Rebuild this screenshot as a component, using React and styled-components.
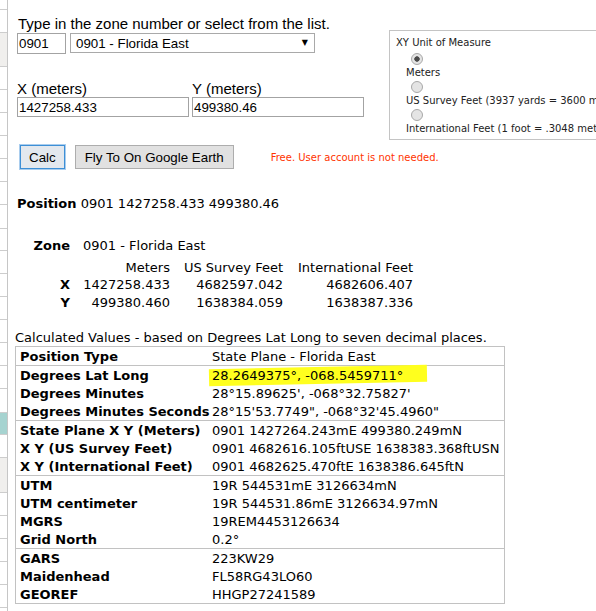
import React from 'react';
import styled, { createGlobalStyle, css } from 'styled-components';

const GlobalStyle = createGlobalStyle`
  html, body { margin: 0; padding: 0; background: #fff; overflow: hidden; }
  body { font-family: "DejaVu Sans", Verdana, sans-serif; color: #000; }
  * { box-sizing: border-box; }
`;

const Page = styled.div`
  display: flex;
  width: 596px;
  height: 611px;
  overflow: hidden;
`;

const Strip = styled.div`
  width: 8px;
  flex-shrink: 0;
  border-right: 1px solid #c6c6c6;
  display: flex;
  flex-direction: column;
`;

const StripCell = styled.div`
  flex-shrink: 0;
  height: ${p => p.$h}px;
  border-bottom: 1px solid #cdcdcd;
  background: ${p => (p.$tone === 'gray' ? '#f0efed' : p.$tone === 'teal' ? '#a6d3d0' : '#fff')};
`;

const Main = styled.main`
  flex: 1;
  min-width: 0;
  padding-left: 7px;
`;

const TopRow = styled.div`
  display: flex;
  align-items: flex-start;
`;

const FormCol = styled.div`
  width: 374px;
  flex-shrink: 0;
  padding-top: 15px;
  font-family: "Liberation Sans", Arial, sans-serif;
`;

const Prompt = styled.div`
  font-size: 15px;
  line-height: 17px;
  margin-left: 3px;
  white-space: nowrap;
`;

const ZoneRow = styled.div`
  display: flex;
  align-items: flex-start;
  gap: 4px;
  margin: 1px 0 0 2px;
`;

const inputBase = css`
  height: 20px;
  border: 1px solid #a3a3a3;
  padding: 0 1px;
  font-family: "Liberation Sans", Arial, sans-serif;
  font-size: 13.33px;
  color: #000;
  background: #fff;
  outline: none;
`;

const ZoneInput = styled.input`
  ${inputBase};
  width: 49px;
  height: 21px;
`;

const SelectBox = styled.div`
  width: 245px;
  height: 20px;
  border: 1px solid #a9a9a9;
  display: flex;
  align-items: center;
  justify-content: space-between;
  padding: 0 6px 0 5px;
  font-size: 13.33px;
  color: #000;
`;

const Arrow = styled.span`
  font-family: "DejaVu Sans", sans-serif;
  font-size: 8px;
  line-height: 1;
`;

const CoordGrid = styled.div`
  display: grid;
  grid-template-columns: 172px 172px;
  column-gap: 3px;
  margin: 26px 0 0 2px;
`;

const FieldLabel = styled.label`
  font-size: 15px;
  line-height: 17px;
`;

const CoordInput = styled.input`
  ${inputBase};
  width: 100%;
`;

const ButtonRow = styled.div`
  display: flex;
  align-items: center;
  margin: 28px 0 0 5px;
  white-space: nowrap;
`;

const Button = styled.button`
  flex-shrink: 0;
  height: 24px;
  padding: 0 ${p => p.$pad || 8}px;
  margin-left: ${p => p.$gap || 0}px;
  border: 1px solid #adadad;
  background: #e1e1e1;
  font-family: "Liberation Sans", Arial, sans-serif;
  font-size: 13.33px;
  color: #000;
  white-space: nowrap;
  ${p =>
    p.$focused &&
    css`
      border-color: #3d8fd6;
      background: #e3e8ee;
      box-shadow: 0 0 0 1px #a9cdee;
    `}
`;

const Note = styled.span`
  flex-shrink: 0;
  margin-left: 37px;
  font-family: "DejaVu Sans", Verdana, sans-serif;
  font-size: 10px;
  color: #ff3300;
  white-space: nowrap;
`;

const UnitBox = styled.div`
  margin-top: 30px;
  width: 260px;
  height: 110px;
  flex-shrink: 0;
  border: 1px solid #c4c4c4;
  padding: 6px 0 0 6px;
  font-size: 10px;
  color: #222;
  white-space: nowrap;
`;

const UnitTitle = styled.div`
  line-height: 12px;
  margin-bottom: 2px;
`;

const UnitOption = styled.label`
  display: grid;
  grid-template-rows: 15px 13px;
  padding-left: 10px;
  line-height: 13px;
`;

const Radio = styled.input`
  appearance: none;
  -webkit-appearance: none;
  width: 12px;
  height: 12px;
  margin: 0 0 0 5px;
  align-self: center;
  border-radius: 50%;
  border: 1px solid #a8a8a8;
  background: #e4e4e4;
  &:checked {
    background: radial-gradient(circle, #4a4a4a 0 2.4px, #e4e4e4 3px);
  }
`;

const Position = styled.div`
  margin: 27px 0 0 2px;
  font-size: 13px;
  line-height: 16px;
`;

const Strong = styled.b`
  font-weight: bold;
`;

const ZoneGrid = styled.div`
  display: grid;
  grid-template-columns: 50px 87px 100px 117px;
  grid-template-rows: 22px 17px 18px 18px;
  column-gap: 13px;
  align-items: start;
  margin: 24px 0 0 5px;
  font-size: 13px;
  line-height: 18px;
  white-space: nowrap;
`;

const ZCell = styled.div`
  text-align: ${p => (p.$left ? 'left' : 'right')};
  font-weight: ${p => (p.$bold ? 'bold' : 'normal')};
  grid-column: ${p => p.$span || 'auto'};
  line-height: ${p => (p.$head ? '17px' : '18px')};
  padding-top: 1px;
`;

const CalcHeading = styled.div`
  margin-top: 19px;
  font-size: 13px;
  line-height: 16px;
  white-space: nowrap;
`;

const ResultTable = styled.div`
  width: 490px;
  border: 1px solid #c2c2c2;
`;

const Group = styled.div`
  & + & {
    border-top: 1px solid #c2c2c2;
  }
`;

const Row = styled.div`
  display: grid;
  grid-template-columns: 196px 1fr;
  height: 18px;
  padding-top: 1px;
  font-size: 13px;
  line-height: 17px;
  white-space: nowrap;
`;

const RowLabel = styled.div`
  font-weight: bold;
  padding-left: 4px;
`;

const RowValue = styled.div``;

const Highlight = styled.span`
  position: relative;
  z-index: 0;
  &::before {
    content: '';
    position: absolute;
    z-index: -1;
    left: -3px;
    right: -24px;
    top: -1px;
    bottom: -1px;
    background: #ffff1e;
    transform: rotate(-1.2deg);
  }
`;

const stripCells = [
  { h: 10 }, { h: 23 }, { h: 34, tone: 'gray' }, { h: 23 }, { h: 23 }, { h: 23 },
  { h: 23 }, { h: 23 }, { h: 23 }, { h: 24 }, { h: 22 }, { h: 23 }, { h: 23 },
  { h: 23 }, { h: 23 }, { h: 23 }, { h: 23 }, { h: 24 }, { h: 22, tone: 'teal' },
  { h: 23 }, { h: 35, tone: 'gray' }, { h: 23 }, { h: 23 }, { h: 23 }, { h: 23 },
  { h: 23 }, { h: 23 },
];

const results = [
  [['Position Type', 'State Plane - Florida East']],
  [
    ['Degrees Lat Long', '28.2649375°, -068.5459711°', true],
    ['Degrees Minutes', "28°15.89625', -068°32.75827'"],
    ['Degrees Minutes Seconds', '28°15\'53.7749", -068°32\'45.4960"'],
  ],
  [
    ['State Plane X Y (Meters)', '0901 1427264.243mE 499380.249mN'],
    ['X Y (US Survey Feet)', '0901 4682616.105ftUSE 1638383.368ftUSN'],
    ['X Y (International Feet)', '0901 4682625.470ftE 1638386.645ftN'],
  ],
  [
    ['UTM', '19R 544531mE 3126634mN'],
    ['UTM centimeter', '19R 544531.86mE 3126634.97mN'],
    ['MGRS', '19REM4453126634'],
    ['Grid North', '0.2°'],
  ],
  [
    ['GARS', '223KW29'],
    ['Maidenhead', 'FL58RG43LO60'],
    ['GEOREF', 'HHGP27241589'],
  ],
];

const units = [
  'Meters',
  'US Survey Feet (3937 yards = 3600 meters)',
  'International Feet (1 foot = .3048 meters)',
];

export default function App() {
  return (
    <>
      <GlobalStyle />
      <Page>
        <Strip>
          {stripCells.map((c, i) => (
            <StripCell key={i} $h={c.h} $tone={c.tone} />
          ))}
        </Strip>
        <Main>
          <TopRow>
            <FormCol>
              <Prompt>Type in the zone number or select from the list.</Prompt>
              <ZoneRow>
                <ZoneInput defaultValue="0901" />
                <SelectBox>
                  <span>0901 - Florida East</span>
                  <Arrow>▼</Arrow>
                </SelectBox>
              </ZoneRow>
              <CoordGrid>
                <FieldLabel>X (meters)</FieldLabel>
                <FieldLabel>Y (meters)</FieldLabel>
                <CoordInput defaultValue="1427258.433" />
                <CoordInput defaultValue="499380.46" />
              </CoordGrid>
              <ButtonRow>
                <Button $focused>Calc</Button>
                <Button $gap={10} $pad={9}>Fly To On Google Earth</Button>
                <Note>Free. User account is not needed.</Note>
              </ButtonRow>
            </FormCol>
            <UnitBox>
              <UnitTitle>XY Unit of Measure</UnitTitle>
              {units.map((u, i) => (
                <UnitOption key={u}>
                  <Radio type="radio" name="unit" defaultChecked={i === 0} />
                  <span>{u}</span>
                </UnitOption>
              ))}
            </UnitBox>
          </TopRow>

          <Position>
            <Strong>Position</Strong> 0901 1427258.433 499380.46
          </Position>

          <ZoneGrid>
            <ZCell $bold>Zone</ZCell>
            <ZCell $left $span="2 / span 3">0901 - Florida East</ZCell>
            <ZCell $head />
            <ZCell $head>Meters</ZCell>
            <ZCell $head>US Survey Feet</ZCell>
            <ZCell $head>International Feet</ZCell>
            <ZCell $bold>X</ZCell>
            <ZCell>1427258.433</ZCell>
            <ZCell>4682597.042</ZCell>
            <ZCell>4682606.407</ZCell>
            <ZCell $bold>Y</ZCell>
            <ZCell>499380.460</ZCell>
            <ZCell>1638384.059</ZCell>
            <ZCell>1638387.336</ZCell>
          </ZoneGrid>

          <CalcHeading>Calculated Values - based on Degrees Lat Long to seven decimal places.</CalcHeading>
          <ResultTable>
            {results.map((g, gi) => (
              <Group key={gi}>
                {g.map(([label, value, hl]) => (
                  <Row key={label}>
                    <RowLabel>{label}</RowLabel>
                    <RowValue>{hl ? <Highlight>{value}</Highlight> : value}</RowValue>
                  </Row>
                ))}
              </Group>
            ))}
          </ResultTable>
        </Main>
      </Page>
    </>
  );
}
